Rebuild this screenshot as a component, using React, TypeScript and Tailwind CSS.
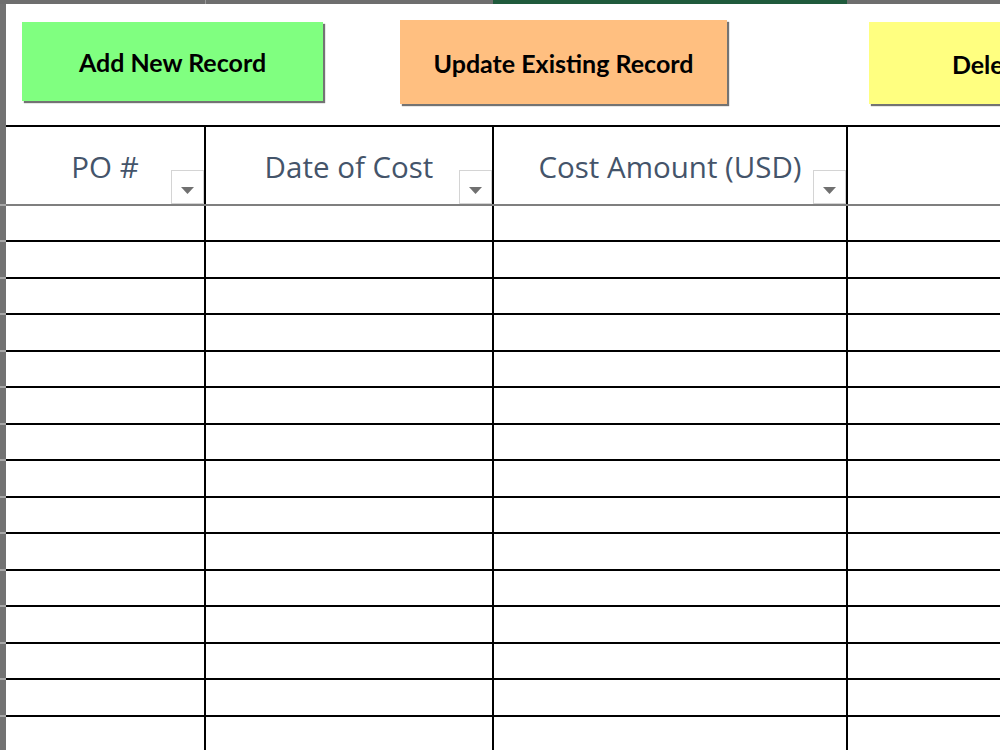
import React from 'react';

const ROW_HEIGHTS = [36, 37, 36, 37, 36, 37, 36, 37, 36, 37, 36, 37, 36, 37, 36];

function Dropdown() {
  return (
    <div className="absolute right-0 bottom-0 w-[33px] h-[34px] bg-white border border-[#d4d4d4] flex items-center justify-center">
      <svg width="13" height="7" viewBox="0 0 13 7" className="mt-[6px]">
        <path d="M0 0 L13 0 L6.5 7 Z" fill="#707070" />
      </svg>
    </div>
  );
}

function Gutter({ tick = true }: { tick?: boolean }) {
  return (
    <div className="w-[6px] shrink-0 h-full bg-[#727272] flex flex-col justify-end">
      {tick && <div className="h-[2px] bg-[#a8a8a8]" />}
    </div>
  );
}

export default function App() {
  return (
    <div className="w-[1000px] h-[750px] overflow-hidden bg-white flex flex-col" style={{ fontFamily: '"Open Sans", sans-serif' }}>
      {/* column header strip */}
      <div className="h-[4px] shrink-0 flex bg-[#6e6e6e]">
        <div className="w-[205px] shrink-0" />
        <div className="w-[1px] shrink-0 bg-[#9a9a9a]" />
        <div className="w-[287px] shrink-0" />
        <div className="w-[354px] shrink-0 bg-[#1f5a3c]" />
        <div className="flex-1" />
      </div>

      {/* button area */}
      <div className="h-[121px] shrink-0 flex">
        <Gutter tick={false} />
        <div className="flex items-start pl-[16px] font-bold text-black" style={{ fontFamily: 'Lato, "Open Sans", sans-serif' }}>
          <button className="shrink-0 w-[301px] h-[79px] mt-[18px] pt-[3px] bg-[#80ff80] text-[25px] shadow-[2px_2px_1px_rgba(0,0,0,0.55)]">
            Add New Record
          </button>
          <button className="shrink-0 ml-[77px] w-[327px] h-[84px] mt-[16px] pt-[3px] bg-[#ffbf80] text-[25px] shadow-[2px_2px_1px_rgba(0,0,0,0.55)]">
            Update Existing Record
          </button>
          <button className="shrink-0 ml-[142px] w-[324px] h-[82px] mt-[18px] pt-[3px] bg-[#ffff80] text-[25px] shadow-[2px_2px_1px_rgba(0,0,0,0.55)]">
            Delete Record
          </button>
        </div>
      </div>

      {/* table header */}
      <div className="h-[81px] shrink-0 flex">
        <Gutter />
        <div className="flex-1 flex border-t-2 border-black border-b-2 border-b-[#7f7f7f] text-[29.5px] text-[#44546a]">
          <div className="relative w-[200px] shrink-0 border-r-2 border-black flex items-center justify-center">
            <span className="mt-[3px]">PO #</span>
            <Dropdown />
          </div>
          <div className="relative w-[288px] shrink-0 border-r-2 border-black flex items-center justify-center">
            <span className="mt-[3px]">Date of Cost</span>
            <Dropdown />
          </div>
          <div className="relative w-[354px] shrink-0 border-r-2 border-black flex items-center justify-center">
            <span className="mt-[3px]">Cost Amount (USD)</span>
            <Dropdown />
          </div>
          <div className="flex-1" />
        </div>
      </div>

      {/* body rows */}
      {ROW_HEIGHTS.map((h, i) => (
        <div key={i} className={`shrink-0 flex ${h === 36 ? 'h-[36px]' : 'h-[37px]'}`}>
          <Gutter />
          <div className="flex-1 flex border-b-2 border-black">
            <div className="w-[200px] shrink-0 border-r-2 border-black" />
            <div className="w-[288px] shrink-0 border-r-2 border-black" />
            <div className="w-[354px] shrink-0 border-r-2 border-black" />
            <div className="flex-1" />
          </div>
        </div>
      ))}
    </div>
  );
}
